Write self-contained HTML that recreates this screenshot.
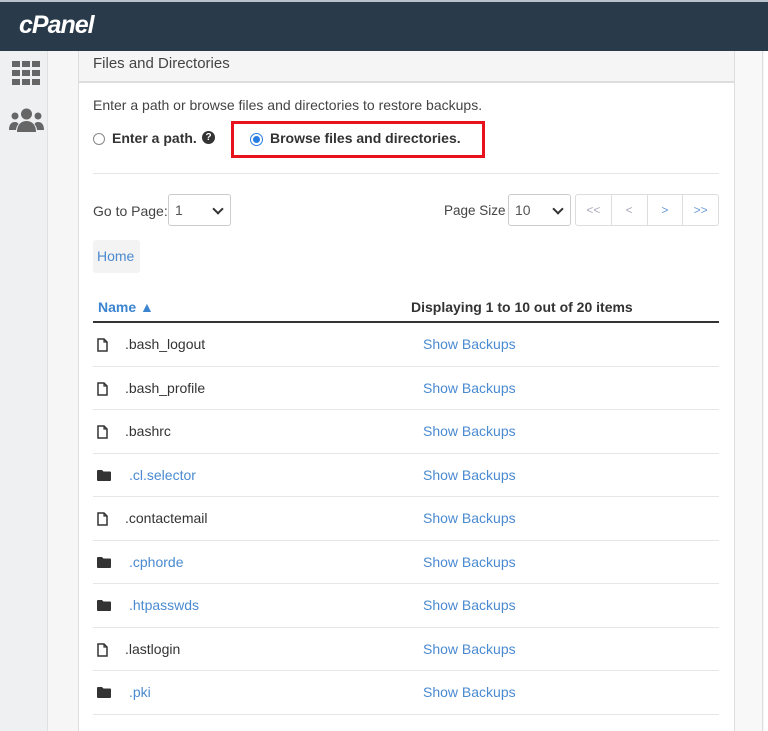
<!DOCTYPE html>
<html style="width:768px;height:731px;overflow:hidden"><head><meta charset="utf-8"><style>
*{margin:0;padding:0;box-sizing:border-box}
body{width:768px;height:731px;overflow:hidden;background:#f6f6f6;font-family:"Liberation Sans",sans-serif;font-size:14px;color:#333;position:relative}
.hdr{position:absolute;left:0;top:0;width:768px;height:51px;background:#293a4a;border-top:2px solid #b8c2cc}
.logo{position:absolute;left:19px;top:9px;color:#fff;font-size:25px;font-weight:bold;font-style:italic;letter-spacing:-1px}
.side{position:absolute;left:0;top:51px;width:48px;height:680px;background:#eef0f2;border-right:1px solid #e0e0e0}
.panel{position:absolute;left:78px;top:51px;width:657px;height:680px;background:#fff;border-left:1px solid #ddd;border-right:1px solid #ddd}
.ph{height:32px;background:#f5f5f5;border-bottom:2px solid #ddd;padding:4px 0 0 14px;font-size:15px;color:#444}
.right{position:absolute;left:735px;top:51px;width:28px;height:680px;background:#f8f8f8;border-right:1px solid #ddd}
.rw{position:absolute;left:764px;top:51px;width:4px;height:680px;background:#fff}
.abs{position:absolute}
.blue{color:#3b84d0}
.sel{position:absolute;height:32px;border:1px solid #ccc;border-radius:3px;background:#fff;padding:7px 6px;font-size:14px;color:#555}
.sel:after{content:"";position:absolute;right:8px;top:10px;width:6px;height:6px;border-right:2px solid #333;border-bottom:2px solid #333;transform:rotate(45deg)}
.pg{position:absolute;left:575px;top:194px;width:144px;height:32px;border:1px solid #ddd;border-radius:3px;display:flex}
.pg div{flex:1;border-left:1px solid #ddd;text-align:center;line-height:30px;font-size:12px;color:#aab}
.pg div:first-child{border-left:none}
.row{position:absolute;left:93px;width:626px;height:43.5px;border-bottom:1px solid #e6e6e6}
.row .ic{position:absolute;left:4px;top:15px}
.row .n{position:absolute;left:32px;top:13px}
.row .s{position:absolute;left:330px;top:13px;color:#4a8ad0}
</style></head><body>
<div class="hdr"><div class="logo">cPanel</div></div>
<div class="side">
<svg class="abs" style="left:12px;top:10px" width="29" height="24" viewBox="0 0 29 24" fill="#666"><rect x="0" y="0" width="8" height="6"/><rect x="10" y="0" width="8" height="6"/><rect x="20" y="0" width="8" height="6"/><rect x="0" y="9" width="8" height="6"/><rect x="10" y="9" width="8" height="6"/><rect x="20" y="9" width="8" height="6"/><rect x="0" y="18" width="8" height="6"/><rect x="10" y="18" width="8" height="6"/><rect x="20" y="18" width="8" height="6"/></svg>
<svg class="abs" style="left:9px;top:57px" width="35" height="26" viewBox="0 0 35 26" fill="#666"><circle cx="17.5" cy="6" r="5.5"/><circle cx="6" cy="8" r="3.5"/><circle cx="29" cy="8" r="3.5"/><path d="M8 24c0-7 4-11 9.5-11S27 17 27 24z"/><path d="M0 22c0-5 2-8 6-8 2 0 3 1 3.5 2-1.5 2-2.5 4-2.5 6z"/><path d="M35 22c0-5-2-8-6-8-2 0-3 1-3.5 2 1.5 2 2.5 4 2.5 6z"/></svg>
</div>
<div class="right"></div><div class="rw"></div>
<div class="panel"><div class="ph">Files and Directories</div></div>
<div class="abs" style="left:93px;top:97px;color:#444">Enter a path or browse files and directories to restore backups.</div>
<div class="abs" style="left:93px;top:133px;width:12px;height:12px;border:1px solid #888;border-radius:50%"></div>
<div class="abs" style="left:112px;top:130px;font-weight:bold;color:#333">Enter a path.</div>
<div class="abs" style="left:202px;top:131px;width:13px;height:13px;border-radius:50%;background:#333;color:#fff;font-size:10px;font-weight:bold;text-align:center;line-height:13px">?</div>
<div class="abs" style="left:231px;top:121px;width:254px;height:37px;border:3px solid #e8121c"></div>
<div class="abs" style="left:250px;top:133px;width:13px;height:13px;border:1px solid #2a7de1;border-radius:50%"><div style="margin:2px;width:7px;height:7px;border-radius:50%;background:#2a7de1"></div></div>
<div class="abs" style="left:270px;top:130px;font-weight:bold;color:#333">Browse files and directories.</div>
<div class="abs" style="left:93px;top:173px;width:626px;height:1px;background:#e6e6e6"></div>
<div class="abs" style="left:93px;top:203px;color:#444">Go to Page:</div>
<div class="sel" style="left:168px;top:194px;width:63px">1</div>
<div class="abs" style="left:444px;top:203px;color:#444;font-size:13.5px">Page Size</div>
<div class="sel" style="left:508px;top:194px;width:63px">10</div>
<div class="pg"><div>&lt;&lt;</div><div>&lt;</div><div style="color:#6a9bd5">&gt;</div><div style="color:#6a9bd5">&gt;&gt;</div></div>
<div class="abs" style="left:93px;top:240px;width:47px;height:33px;background:#f3f3f3;border-radius:3px;color:#4a8ad0;padding:8px 0 0 4px">Home</div>
<div class="abs blue" style="left:98px;top:299px;font-weight:bold">Name ▲</div>
<div class="abs" style="left:411px;top:299px;font-weight:bold;color:#333">Displaying 1 to 10 out of 20 items</div>
<div class="abs" style="left:93px;top:321px;width:626px;height:2px;background:#333"></div>
<div id="rows"></div>
<script>
var d=[["f",".bash_logout"],["f",".bash_profile"],["f",".bashrc"],["d",".cl.selector"],["f",".contactemail"],["d",".cphorde"],["d",".htpasswds"],["f",".lastlogin"],["d",".pki"],["d",".softaculous"]];
var h="";
d.forEach(function(r,i){var t=323+i*43.5;
var ic=r[0]=="f"?'<svg class="ic" width="11" height="14" viewBox="0 0 11 14"><path d="M1 1h6l3 3v9H1z" fill="none" stroke="#333" stroke-width="1.5"/><path d="M7 1v3h3" fill="none" stroke="#333" stroke-width="1.2"/></svg>':'<svg class="ic" style="top:16px" width="14" height="11" viewBox="0 0 14 11"><path d="M0 1q0-1 1-1h4l1.5 1.5H13q1 0 1 1V10q0 1-1 1H1q-1 0-1-1z" fill="#333"/></svg>';
h+='<div class="row" style="top:'+t+'px">'+ic+'<span class="n"'+(r[0]=="d"?' style="left:36px;color:#4a8ad0"':'')+'>'+r[1]+'</span><span class="s">Show Backups</span></div>';});
document.getElementById("rows").innerHTML=h;
</script>
</body></html>
